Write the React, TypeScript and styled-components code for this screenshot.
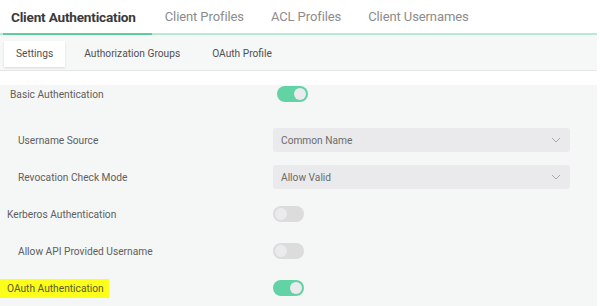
import React from "react";
import styled, { createGlobalStyle } from "styled-components";

const Global = createGlobalStyle`
  html, body { margin: 0; padding: 0; background: #ffffff; }
  body { font-family: "Roboto", "Liberation Sans", sans-serif; width: 600px; height: 306px; overflow: hidden; }
  * { box-sizing: border-box; }
`;

const Page = styled.div`
  width: 600px;
  height: 306px;
  display: flex;
  flex-direction: column;
  background: #ffffff;
`;

const TopTabs = styled.div`
  display: flex;
  height: 35px;
  margin-right: 3px;
  border-bottom: 2px solid #b7ead5;
  padding-left: 3px;
`;

const TopTab = styled.div<{ $active?: boolean }>`
  display: flex;
  align-items: center;
  white-space: nowrap;
  padding: ${(p) => (p.$active ? "0 16px 0 8px" : "0 14px 0 13px")};
  margin-bottom: -2px;
  font-size: ${(p) => (p.$active ? "13.6px" : "13px")};
  letter-spacing: ${(p) => (p.$active ? "-0.2px" : "-0.1px")};
  font-weight: ${(p) => (p.$active ? 700 : 400)};
  color: ${(p) => (p.$active ? "#3a3a3a" : "#8c8c8c")};
  border-bottom: 2px solid ${(p) => (p.$active ? "#5ccf9c" : "transparent")};
`;

const SubTabs = styled.div`
  display: flex;
  align-items: center;
  height: 36px;
  margin-right: 3px;
  padding: 5px 0 3px 4px;
  background: #f6f7f7;
  border-bottom: 1px solid #e6e6e6;
`;

const SubTab = styled.div<{ $active?: boolean }>`
  height: 26px;
  display: flex;
  align-items: center;
  padding: 0 ${(p) => (p.$active ? "12px" : "16px")};
  margin-right: ${(p) => (p.$active ? "3px" : "0")};
  font-size: 10.2px;
  color: #505050;
  background: ${(p) => (p.$active ? "#ffffff" : "transparent")};
  box-shadow: ${(p) => (p.$active ? "0 1px 2px rgba(0,0,0,0.12)" : "none")};
`;

const Spacer = styled.div`
  height: 14px;
`;

const Panel = styled.div`
  flex: 1;
  margin-right: 3px;
  background: #f5f6f6;
  display: flex;
  flex-direction: column;
  gap: 1px;
`;

const Row = styled.div<{ $h: number; $mb?: number }>`
  height: ${(p) => p.$h}px;
  margin-bottom: ${(p) => p.$mb ?? 0}px;
  display: grid;
  grid-template-columns: 273px 297px;
  align-items: center;
`;

const Label = styled.div<{ $indent: number; $highlight?: boolean }>`
  font-size: 10.2px;
  color: #606060;
  padding-left: ${(p) => p.$indent}px;
  justify-self: start;
  ${(p) =>
    p.$highlight
      ? `background: #fbff1a; padding: 4px 5px 4px ${p.$indent}px; color: #5a5a2a;`
      : ""}
`;

const Control = styled.div<{ $offset?: number }>`
  padding-left: ${(p) => p.$offset ?? 0}px;
  display: flex;
  align-items: center;
`;

const Toggle = styled.div<{ $on?: boolean }>`
  width: 31px;
  height: 16px;
  border-radius: 8px;
  background: ${(p) => (p.$on ? "#62d3a4" : "#dcdcdc")};
  display: flex;
  align-items: center;
  justify-content: ${(p) => (p.$on ? "flex-end" : "flex-start")};
  padding: 0 2px;
`;

const Knob = styled.div`
  width: 12px;
  height: 12px;
  border-radius: 50%;
  background: #ebebee;
`;

const Select = styled.div`
  height: 24px;
  width: 297px;
  border-radius: 3px;
  background: #eaeaec;
  display: flex;
  align-items: center;
  justify-content: space-between;
  padding: 0 9px 0 8px;
  font-size: 10.2px;
  color: #6a6a6a;
`;

const Chevron = () => (
  <svg width="10" height="6" viewBox="0 0 10 6">
    <path d="M1 1 L5 5 L9 1" fill="none" stroke="#a8a8ac" strokeWidth="1" />
  </svg>
);

export default function App() {
  return (
    <Page>
      <Global />
      <TopTabs>
        <TopTab $active>Client Authentication</TopTab>
        <TopTab>Client Profiles</TopTab>
        <TopTab>ACL Profiles</TopTab>
        <TopTab>Client Usernames</TopTab>
      </TopTabs>
      <SubTabs>
        <SubTab $active>Settings</SubTab>
        <SubTab>Authorization Groups</SubTab>
        <SubTab>OAuth Profile</SubTab>
      </SubTabs>
      <Spacer />
      <Panel>
        <Row $h={18} $mb={18}>
          <Label $indent={10}>Basic Authentication</Label>
          <Control $offset={4}>
            <Toggle $on><Knob /></Toggle>
          </Control>
        </Row>
        <Row $h={36}>
          <Label $indent={18}>Username Source</Label>
          <Control>
            <Select>Common Name<Chevron /></Select>
          </Control>
        </Row>
        <Row $h={36}>
          <Label $indent={18}>Revocation Check Mode</Label>
          <Control>
            <Select>Allow Valid<Chevron /></Select>
          </Control>
        </Row>
        <Row $h={36}>
          <Label $indent={7}>Kerberos Authentication</Label>
          <Control>
            <Toggle><Knob /></Toggle>
          </Control>
        </Row>
        <Row $h={36}>
          <Label $indent={18}>Allow API Provided Username</Label>
          <Control>
            <Toggle><Knob /></Toggle>
          </Control>
        </Row>
        <Row $h={36}>
          <Label $indent={7} $highlight>OAuth Authentication</Label>
          <Control>
            <Toggle $on><Knob /></Toggle>
          </Control>
        </Row>
      </Panel>
    </Page>
  );
}
